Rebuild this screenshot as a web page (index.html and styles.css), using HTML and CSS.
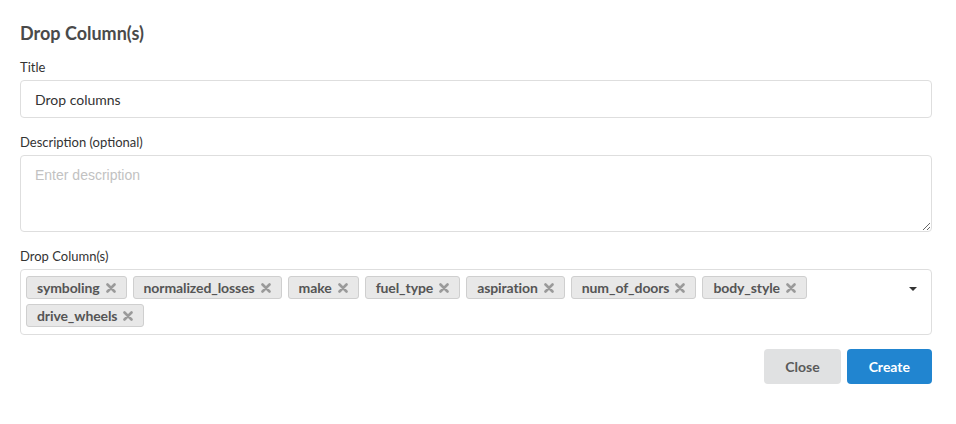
FILE: index.html
```html
<!DOCTYPE html>
<html>
<head>
<meta charset="utf-8">
<link rel="stylesheet" href="styles.css">
</head>
<body>
<div class="modal">
  <h2 class="heading">Drop Column(s)</h2>
  <div class="field">
    <label class="label">Title</label>
    <input class="input" type="text" value="Drop columns">
  </div>
  <div class="field">
    <label class="label">Description (optional)</label>
    <textarea class="textarea" placeholder="Enter description"></textarea>
  </div>
  <div class="field field-last">
    <label class="label">Drop Column(s)</label>
    <div class="multi">
      <div class="tags">
        <span class="tag">symboling<svg class="x" viewBox="0 0 10 10"><path d="M1.5 1.5L8.5 8.5M8.5 1.5L1.5 8.5"/></svg></span>
        <span class="tag">normalized_losses<svg class="x" viewBox="0 0 10 10"><path d="M1.5 1.5L8.5 8.5M8.5 1.5L1.5 8.5"/></svg></span>
        <span class="tag">make<svg class="x" viewBox="0 0 10 10"><path d="M1.5 1.5L8.5 8.5M8.5 1.5L1.5 8.5"/></svg></span>
        <span class="tag">fuel_type<svg class="x" viewBox="0 0 10 10"><path d="M1.5 1.5L8.5 8.5M8.5 1.5L1.5 8.5"/></svg></span>
        <span class="tag">aspiration<svg class="x" viewBox="0 0 10 10"><path d="M1.5 1.5L8.5 8.5M8.5 1.5L1.5 8.5"/></svg></span>
        <span class="tag">num_of_doors<svg class="x" viewBox="0 0 10 10"><path d="M1.5 1.5L8.5 8.5M8.5 1.5L1.5 8.5"/></svg></span>
        <span class="tag">body_style<svg class="x" viewBox="0 0 10 10"><path d="M1.5 1.5L8.5 8.5M8.5 1.5L1.5 8.5"/></svg></span>
        <span class="tag">drive_wheels<svg class="x" viewBox="0 0 10 10"><path d="M1.5 1.5L8.5 8.5M8.5 1.5L1.5 8.5"/></svg></span>
      </div>
      <span class="caret"></span>
    </div>
  </div>
  <div class="actions">
    <button class="btn btn-close">Close</button>
    <button class="btn btn-create">Create</button>
  </div>
</div>
</body>
</html>
```
FILE: styles.css
```css
html, body {
  margin: 0;
  padding: 0;
  background: #ffffff;
}
body {
  font-family: Lato, "Noto Sans", sans-serif;
  color: #333333;
}
.modal {
  padding: 22px 24px 0 20px;
}
.heading {
  margin: 0 0 14px 0;
  font-size: 18px;
  line-height: 22px;
  font-weight: 700;
  color: #4a4a4a;
}
.field {
  margin-bottom: 15px;
  display: flex;
  flex-direction: column;
}
.field-last {
  margin-bottom: 14px;
}
.label {
  font-size: 13px;
  line-height: 18px;
  margin-bottom: 4px;
  color: #333333;
}
.input {
  box-sizing: border-box;
  height: 38px;
  border: 1px solid #dedede;
  border-radius: 4px;
  padding: 0 14px;
  font-family: Lato, sans-serif;
  font-size: 14px;
  color: #333333;
  outline: none;
  margin: 0;
}
.textarea {
  box-sizing: border-box;
  height: 77px;
  border: 1px solid #dedede;
  border-radius: 4px;
  padding: 11px 14px;
  font-family: "Liberation Sans", Arial, sans-serif;
  font-size: 14px;
  resize: vertical;
  outline: none;
  margin: 0;
}
.textarea::placeholder {
  color: #c2c2c2;
}
.multi {
  box-sizing: border-box;
  min-height: 66px;
  border: 1px solid #dedede;
  border-radius: 4px;
  padding: 6px 14px 6px 5px;
  display: flex;
  align-items: flex-start;
}
.tags {
  flex: 1;
  display: flex;
  flex-wrap: wrap;
  gap: 5px 6px;
}
.tag {
  box-sizing: border-box;
  height: 23px;
  display: inline-flex;
  align-items: center;
  gap: 6px;
  padding: 0 10px;
  background: #e8e8e8;
  border: 1px solid #cfcfcf;
  border-radius: 3px;
  font-size: 14px;
  font-weight: 700;
  letter-spacing: -0.1px;
  color: #555555;
}
.x {
  width: 10px;
  height: 10px;
  stroke: #9a9a9a;
  stroke-width: 2.6;
  stroke-linecap: round;
  fill: none;
}
.caret {
  margin-top: 11px;
  width: 0;
  height: 0;
  border-left: 4px solid transparent;
  border-right: 4px solid transparent;
  border-top: 4px solid #333333;
}
.actions {
  display: flex;
  justify-content: flex-end;
  gap: 6px;
}
.btn {
  height: 35px;
  border: none;
  border-radius: 4px;
  padding: 0 22px;
  font-family: Lato, sans-serif;
  font-size: 14px;
  font-weight: 700;
  cursor: pointer;
}
.btn-close {
  background: #e0e1e2;
  color: #5a5a5a;
  padding: 0 21px;
}
.btn-create {
  background: #2185d0;
  color: #ffffff;
}
```
